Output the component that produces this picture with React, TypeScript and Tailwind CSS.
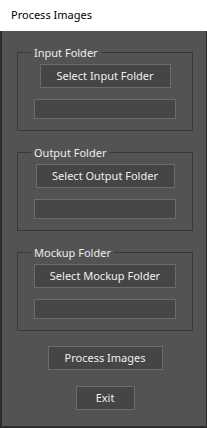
import React from 'react';

const font = { fontFamily: '"Noto Sans", "Open Sans", sans-serif' };

function FolderGroup({ label, button, width }: { label: string; button: string; width: string }) {
  return (
    <div className="relative w-[176px] h-[79px] border border-[#383838] flex flex-col items-center pt-[11px]">
      <span className="absolute left-[13px] -top-[8px] px-[3px] bg-[#535353] text-[11px] leading-[16px] text-[#ececec]">
        {label}
      </span>
      <button className={`${width} h-[24px] bg-[#454545] border border-[#6b6b6b] text-[11px] text-[#f0f0f0]`}>
        {button}
      </button>
      <div className="mt-[11px] w-[142px] h-[20px] bg-[#464646] border border-[#6b6b6b]" />
    </div>
  );
}

export default function App() {
  return (
    <div className="w-[207px] h-[428px] flex flex-col" style={font}>
      <div className="h-[31px] bg-white flex items-center pl-[11px] text-[11px] text-black">Process Images</div>
      <div className="flex-1 bg-[#535353] border-l-2 border-r border-b-2 border-[#2e2e2e] flex flex-col pl-[15px] pt-[21px]">
        <div className="flex flex-col gap-[21px]">
          <FolderGroup label="Input Folder" button="Select Input Folder" width="w-[131px]" />
          <FolderGroup label="Output Folder" button="Select Output Folder" width="w-[139px]" />
          <FolderGroup label="Mockup Folder" button="Select Mockup Folder" width="w-[142px]" />
        </div>
        <div className="w-[176px] flex flex-col items-center">
          <button className="mt-[15px] w-[115px] h-[24px] bg-[#454545] border border-[#6b6b6b] text-[11px] text-[#f0f0f0]">
            Process Images
          </button>
          <button className="mt-[16px] w-[59px] h-[24px] bg-[#454545] border border-[#6b6b6b] text-[11px] text-[#f0f0f0]">
            Exit
          </button>
        </div>
      </div>
    </div>
  );
}
